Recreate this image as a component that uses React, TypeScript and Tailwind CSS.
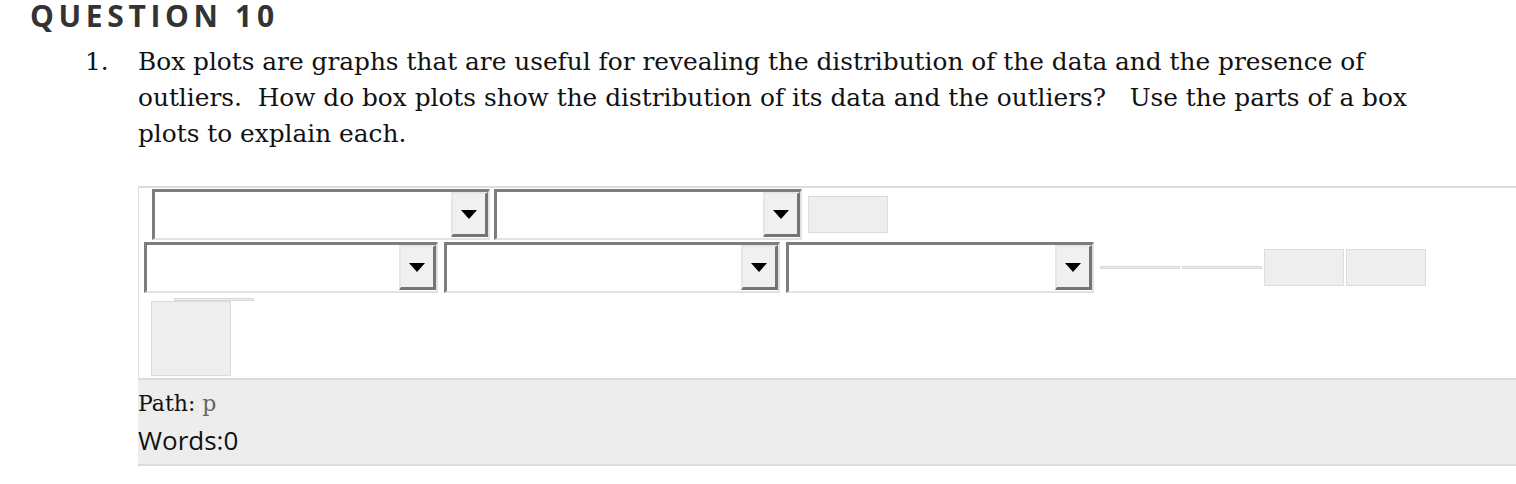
import React from 'react'

function Select({ width }: { width: number }) {
  return (
    <div
      className="flex h-[51px] shrink-0 border-t-[3px] border-l-[3px] border-r-2 border-b-2 border-t-[#7d7d7d] border-l-[#7d7d7d] border-r-[#e2e2e2] border-b-[#e2e2e2] bg-white"
      style={{ width }}
    >
      <div className="flex-1" />
      <div className="flex h-[45px] w-[37px] items-center justify-center border-t-2 border-l-2 border-r-[3px] border-b-[3px] border-t-[#e6e6e6] border-l-[#e6e6e6] border-r-[#747474] border-b-[#747474] bg-[#f0f0f0]">
        <svg width="16" height="9" viewBox="0 0 16 9">
          <polygon points="0,0 16,0 8,9" fill="#000" />
        </svg>
      </div>
    </div>
  )
}

function GrayBox({ w = 80, h = 37 }: { w?: number; h?: number }) {
  return <div className="shrink-0 border border-[#dcdcdc] bg-[#eeeeee]" style={{ width: w, height: h }} />
}

function Rule() {
  return <div className="h-[3px] w-[80px] shrink-0 border border-[#d8d8d8] bg-[#ececec]" />
}

export default function App() {
  return (
    <div className="h-[484px] w-[1516px] overflow-hidden bg-white">
      <h1 className="pl-[30px] pt-[1px] font-['Open_Sans',sans-serif] text-[30px] font-bold leading-[30px] tracking-[0.155em] text-[#333333]">
        QUESTION 10
      </h1>
      <div className="mt-[13px] flex font-['DejaVu_Serif',serif] text-[24.8px] leading-[36px] text-[#111]">
        <span className="w-[138px] shrink-0 pl-[85px]">1.</span>
        <p>
          Box plots are graphs that are useful for revealing the distribution of the data and the presence of
          <br />
          outliers.&nbsp; How do box plots show the distribution of its data and the outliers?&nbsp;&nbsp; Use the parts of a box
          <br />
          plots to explain each.
        </p>
      </div>

      <div className="ml-[138px] mt-[34px] w-[1400px]">
        <div className="h-[192px] border-t-2 border-l border-[#dedede] pt-[1px]">
          <div className="flex items-center gap-[4px] pl-[13px]">
            <Select width={338} />
            <Select width={308} />
            <div className="ml-[2px]">
              <GrayBox />
            </div>
          </div>
          <div className="mt-[2px] flex items-center gap-[6px] pl-[5px]">
            <Select width={294} />
            <Select width={336} />
            <Select width={308} />
            <div className="flex items-center gap-[2px]">
              <Rule />
              <Rule />
              <GrayBox />
              <GrayBox />
            </div>
          </div>
          <div className="relative mt-[5px] pl-[12px]">
            <div className="absolute left-[35px] top-[0px]">
              <Rule />
            </div>
            <div className="pt-[3px]">
              <GrayBox w={80} h={75} />
            </div>
          </div>
        </div>
        <div className="h-[88px] border-t-2 border-b-2 border-[#dcdcdc] bg-[#ededed]">
          <div className="pt-[9px] font-['DejaVu_Serif',serif] text-[22px] leading-[30px] text-[#111]">
            Path: <span className="text-[#666]">p</span>
          </div>
          <div className="pt-[4px] font-['Open_Sans',sans-serif] text-[26px] leading-[34px] text-[#111]">Words:0</div>
        </div>
      </div>
    </div>
  )
}
